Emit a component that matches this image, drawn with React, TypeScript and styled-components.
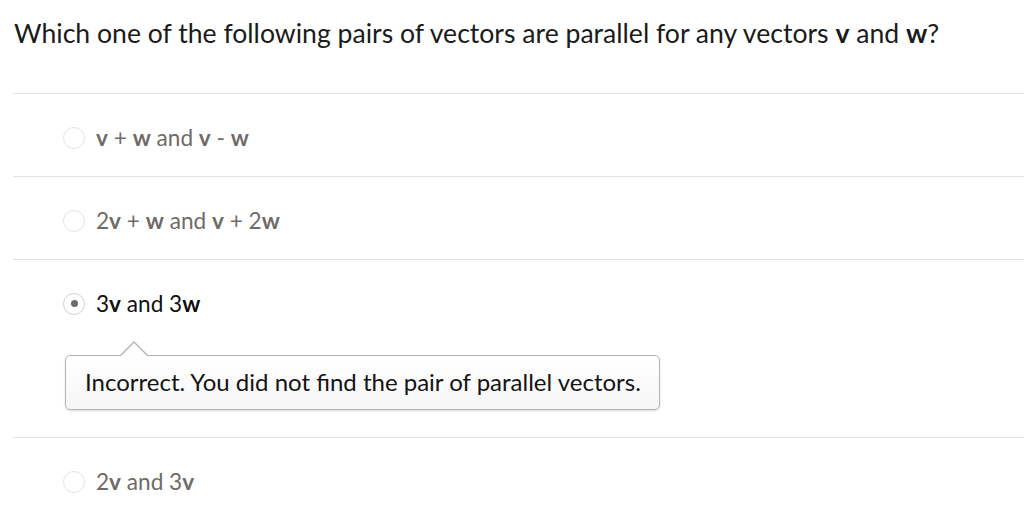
import React from "react";
import styled, { createGlobalStyle } from "styled-components";

const Global = createGlobalStyle`
  html, body { margin: 0; padding: 0; background: #fff; }
  body { font-family: Lato, "Open Sans", sans-serif; -webkit-font-smoothing: antialiased; }
`;

const Page = styled.div`
  padding-left: 13px;
`;

const Question = styled.h1`
  margin: 0;
  padding: 16px 0 0 1px;
  height: 77px;
  font-size: 26.6px;
  font-weight: 400;
  line-height: 34px;
  color: #1b1b1b;
  border-bottom: 1px solid #e3e3e3;
`;

const Row = styled.div`
  padding: 32px 0 27px 50px;
  border-bottom: 1px solid #e3e3e3;
  &:last-child { border-bottom: none; }
`;

const Option = styled.label<{ $selected?: boolean }>`
  display: flex;
  align-items: center;
  gap: 11px;
  height: 23px;
  font-size: 22.6px;
  line-height: 23px;
  color: ${(p) => (p.$selected ? "#111" : "#6f6b67")};
`;

const Radio = styled.span<{ $checked?: boolean }>`
  box-sizing: border-box;
  width: 22px;
  height: 22px;
  border-radius: 50%;
  border: 1px solid ${(p) => (p.$checked ? "#d2d2d2" : "#e4e4e4")};
  background: #fff;
  display: flex;
  align-items: center;
  justify-content: center;
  flex: none;
  &::after {
    content: "";
    display: ${(p) => (p.$checked ? "block" : "none")};
    width: 7px;
    height: 7px;
    border-radius: 50%;
    background: #6a6a6a;
  }
`;

const Vec = styled.b`
  font-weight: 700;
`;

const Feedback = styled.div`
  position: relative;
  margin: 40px 0 0 2px;
  width: 595px;
  box-sizing: border-box;
  height: 55px;
  padding: 0 0 2px 19px;
  display: flex;
  align-items: center;
  font-size: 24px;
  color: #141414;
  border: 1px solid #b9b4ae;
  border-radius: 5px;
  background: linear-gradient(#ffffff, #f6f6f6);
  box-shadow: 0 1px 2px rgba(0, 0, 0, 0.15);
  &::before {
    content: "";
    position: absolute;
    left: 53px;
    top: -15px;
    width: 0;
    height: 0;
    border-left: 15px solid transparent;
    border-right: 15px solid transparent;
    border-bottom: 15px solid #b9b4ae;
  }
  &::after {
    content: "";
    position: absolute;
    left: 54px;
    top: -13px;
    width: 0;
    height: 0;
    border-left: 14px solid transparent;
    border-right: 14px solid transparent;
    border-bottom: 14px solid #fff;
  }
`;

const FeedbackRow = styled(Row)`
  padding-bottom: 27px;
`;

export default function App() {
  return (
    <>
      <Global />
      <Page>
        <Question>
          Which one of the following pairs of vectors are parallel for any vectors <Vec>v</Vec> and <Vec>w</Vec>?
        </Question>
        <Row>
          <Option>
            <Radio />
            <span>
              <Vec>v</Vec> + <Vec>w</Vec> and <Vec>v</Vec> - <Vec>w</Vec>
            </span>
          </Option>
        </Row>
        <Row>
          <Option>
            <Radio />
            <span>
              2<Vec>v</Vec> + <Vec>w</Vec> and <Vec>v</Vec> + 2<Vec>w</Vec>
            </span>
          </Option>
        </Row>
        <FeedbackRow>
          <Option $selected>
            <Radio $checked />
            <span>
              3<Vec>v</Vec> and 3<Vec>w</Vec>
            </span>
          </Option>
          <Feedback>Incorrect. You did not find the pair of parallel vectors.</Feedback>
        </FeedbackRow>
        <Row>
          <Option>
            <Radio />
            <span>
              2<Vec>v</Vec> and 3<Vec>v</Vec>
            </span>
          </Option>
        </Row>
      </Page>
    </>
  );
}
